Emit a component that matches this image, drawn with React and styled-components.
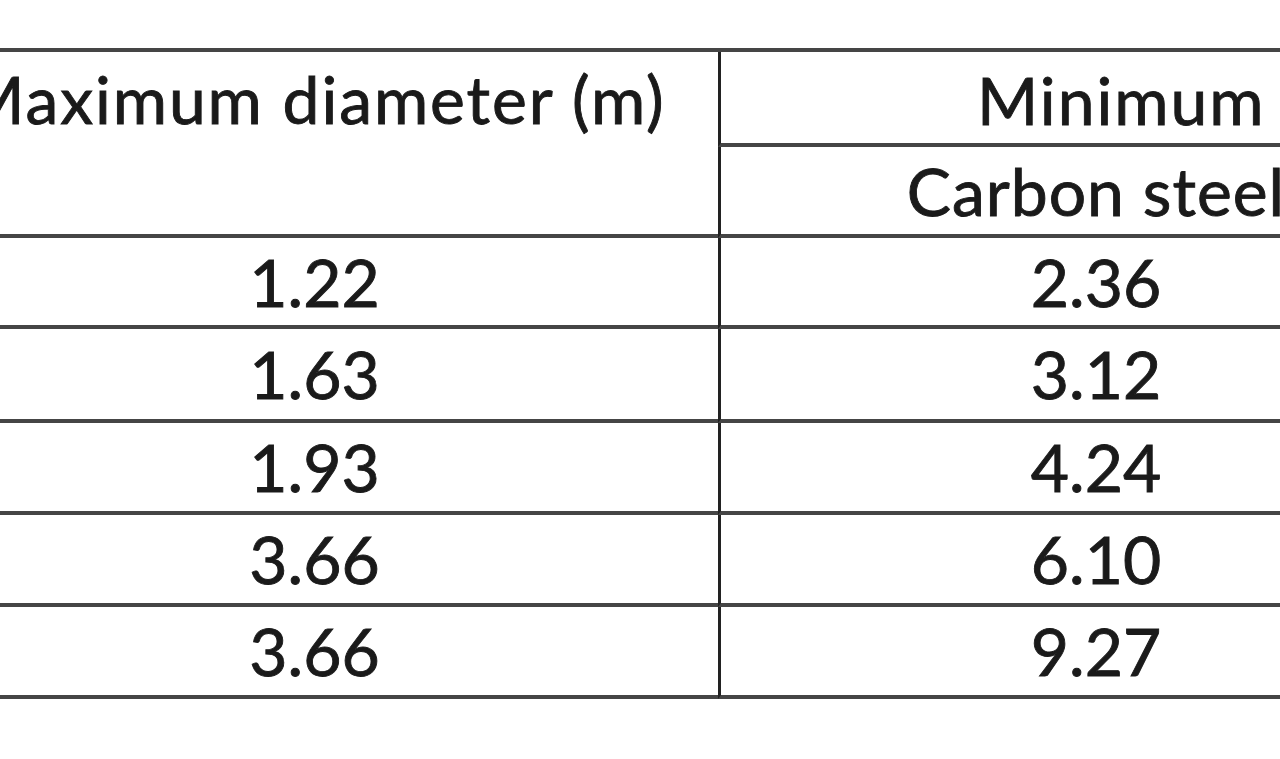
import React from 'react'
import styled, { createGlobalStyle } from 'styled-components'

const GlobalStyle = createGlobalStyle`
  html, body {
    margin: 0;
    padding: 0;
    background: #ffffff;
    overflow: hidden;
  }
  body {
    width: 1280px;
    height: 759px;
  }
`

const rows = [
  { diameter: '1.22', carbon: '2.36', height: 91 },
  { diameter: '1.63', carbon: '3.12', height: 94 },
  { diameter: '1.93', carbon: '4.24', height: 92 },
  { diameter: '3.66', carbon: '6.10', height: 92 },
  { diameter: '3.66', carbon: '9.27', height: 92 }
]

const Table = styled.div`
  display: grid;
  grid-template-columns: 807px 753px;
  grid-template-rows: 95px 91px ${rows.map(r => r.height + 'px').join(' ')};
  width: 1560px;
  margin: 48px 0 0 -89px;
  border-top: 4px solid #454545;
  font-family: Lato, "Open Sans", "Liberation Sans", sans-serif;
  color: #1a1a1a;
  filter: blur(0.4px);
`

const Cell = styled.div`
  box-sizing: border-box;
  display: flex;
  align-items: center;
  justify-content: center;
  border-bottom: 4px solid #454545;
  font-size: 66px;
  line-height: 1;
  white-space: nowrap;
  overflow: hidden;
  -webkit-text-stroke: 0.9px #1a1a1a;
  letter-spacing: ${props => props.spacing || 0}px;
  border-left: ${props => props.right ? '3px solid #222222' : 'none'};
`

const SpanCell = styled(Cell)`
  grid-row: span 2;
  align-items: flex-start;
  padding-top: 14px;
`

const GroupCell = styled(Cell)`
  justify-content: flex-start;
  padding-left: 256px;
  padding-top: 4px;
  word-spacing: 24px;
`

export default function App () {
  return (
    <>
      <GlobalStyle />
      <Table>
        <SpanCell spacing={1.9}>Maximum diameter (m)</SpanCell>
        <GroupCell right spacing={2}>Minimum thickness (mm)</GroupCell>
        <Cell right spacing={1}>Carbon steel</Cell>
        {rows.map((row, i) => (
          <React.Fragment key={i}>
            <Cell>{row.diameter}</Cell>
            <Cell right>{row.carbon}</Cell>
          </React.Fragment>
        ))}
      </Table>
    </>
  )
}
